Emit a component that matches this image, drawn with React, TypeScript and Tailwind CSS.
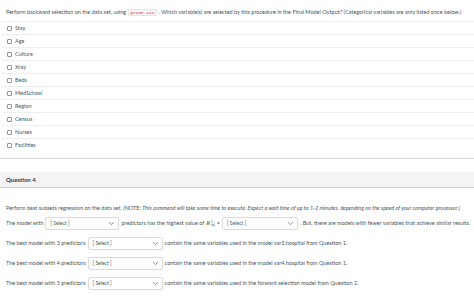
import { ChevronDown } from 'lucide-react';

const options = ['Stay', 'Age', 'Culture', 'Xray', 'Beds', 'MedSchool', 'Region', 'Census', 'Nurses', 'Facilities'];

function Select({ w }: { w: string }) {
  return (
    <span className={`inline-flex h-[13px] ${w} shrink-0 items-center justify-between rounded-[2px] border border-[#d7dbde] bg-white pl-[4px] pr-[2px]`}>
      <span className="text-[5px] text-[#4a545b]">[ Select ]</span>
      <ChevronDown size={9} strokeWidth={1.5} className="text-[#2d3b45]" />
    </span>
  );
}

export default function App() {
  return (
    <div className="h-[305px] w-[474px] overflow-hidden bg-white font-['Lato','Liberation_Sans',sans-serif] text-[5.5px] text-[#4a545b]">
      <p className="whitespace-nowrap px-[6px] pt-[9px] leading-[7px]">
        Perform backward selection on the data set, using{' '}
        <code className="rounded-[1px] border border-[#e4e7e9] bg-[#f7f7f7] px-[2px] font-['Liberation_Mono',monospace] text-[4.4px] text-[#dd1144]">prune.aic</code>
        {' '}. Which variable(s) are selected by this procedure in the Final Model Output? (Categorical variables are only listed once below.)
      </p>
      <ul className="mt-[5px] pl-[2px]">
        {options.map((o) => (
          <li key={o} className="flex h-[13px] items-center gap-[3px] border-t border-[#eceef0] pl-[5px]">
            <span className="h-[5px] w-[5px] rounded-[1px] border border-[#8b969e] bg-white" />
            <span>{o}</span>
          </li>
        ))}
      </ul>
      <div className="mt-[7px] border-t border-[#d3d7da]" />
      <div className="mt-[13px] flex h-[16px] items-center border-b border-[#c7cdd1] bg-[#f5f5f5] px-[6px] text-[6px] font-bold text-[#2d3b45]">
        Question 4
      </div>
      <div className="px-[6px]">
        <p className="mt-[17px] whitespace-nowrap leading-[7px]">
          Perform best subsets regression on the data set. (NOTE: <i>This command will take some time to execute. Expect a wait time of up to 1-2 minutes, depending on the speed of your computer processor.)</i>
        </p>
        <div className="mt-[5px] flex items-center gap-[2px] whitespace-nowrap">
          <span>The model with</span>
          <Select w="w-[74px]" />
          <span className="inline-flex items-center gap-[1px]">
            predictors has the highest value of
            <i className="ml-[1px] font-['Liberation_Serif',serif] text-[6px]">R</i>
            <span className="inline-flex flex-col text-[3px] leading-[3px]">
              <span>2</span>
              <span>adj</span>
            </span>
            <span className="ml-[1px]">=</span>
          </span>
          <Select w="w-[76px]" />
          <span>. But, there are models with fewer variables that achieve similar results.</span>
        </div>
        <div className="mt-[7px] flex items-center gap-[2px] whitespace-nowrap">
          <span>The best model with 3 predictors</span>
          <Select w="w-[75px]" />
          <span>contain the same variables used in the model var3.hospital from Question 1.</span>
        </div>
        <div className="mt-[7px] flex items-center gap-[2px] whitespace-nowrap">
          <span>The best model with 4 predictors</span>
          <Select w="w-[75px]" />
          <span>contain the same variables used in the model var4.hospital from Question 1.</span>
        </div>
        <div className="mt-[7px] flex items-center gap-[2px] whitespace-nowrap">
          <span>The best model with 5 predictors</span>
          <Select w="w-[75px]" />
          <span>contain the same variables used in the forward selection model from Question 2.</span>
        </div>
      </div>
    </div>
  );
}
